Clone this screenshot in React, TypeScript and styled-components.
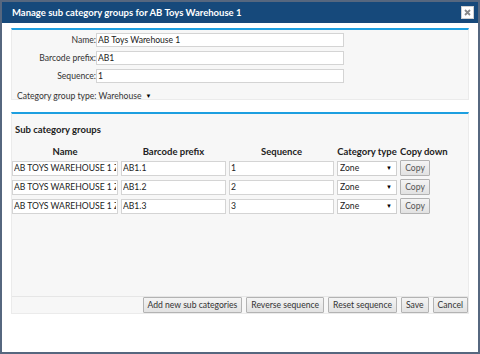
import React from 'react';
import styled, { createGlobalStyle } from 'styled-components';

const Global = createGlobalStyle`
  html, body { margin: 0; padding: 0; background: #fff; }
  body { font-family: Lato, "Open Sans", sans-serif; color: #222; }
  #root { width: 480px; height: 354px; }
  * { box-sizing: border-box; }
`;

const Window = styled.div`
  width: 480px;
  height: 354px;
  border: 2px solid #56677f;
  background: #fff;
  display: flex;
  flex-direction: column;
`;

const TitleBar = styled.div`
  height: 21px;
  flex: none;
  background: #16497b;
  display: flex;
  align-items: center;
  justify-content: space-between;
  padding: 0 4px 0 10px;
`;

const Title = styled.div`
  color: #fff;
  font-weight: 700;
  font-size: 9.5px;
`;

const CloseButton = styled.button`
  width: 13px;
  height: 13px;
  padding: 0;
  background: #fff;
  border: 1px solid #cfcfcf;
  display: flex;
  align-items: center;
  justify-content: center;
`;

const Body = styled.div`
  padding: 5px 9px 0 9px;
  display: flex;
  flex-direction: column;
  gap: 12px;
`;

const Panel = styled.div`
  background: #f7f7f7;
  border: 1px solid #ebebeb;
  border-top: 2px solid #1d9fe0;
`;

const FormPanel = styled(Panel)`
  height: 72px;
  padding-top: 3px;
  display: flex;
  flex-direction: column;
  gap: 4px;
`;

const FormRow = styled.label`
  display: grid;
  grid-template-columns: 84px 248px;
  align-items: center;
  font-size: 8.6px;
`;

const FieldLabel = styled.span`
  text-align: right;
  color: #333;
  white-space: nowrap;
`;

const TextInput = styled.input`
  display: block;
  height: 14px;
  width: 100%;
  border: 1px solid #d4d4d4;
  background: #fff;
  font: inherit;
  font-size: 8.6px;
  color: #222;
  padding: 0 1px;
  outline: none;
`;

const TypeLine = styled.div`
  margin-top: 3px;
  padding-left: 5px;
  font-size: 8.6px;
  color: #333;
  line-height: 12px;
`;

const SmallArrow = styled.span`
  font-size: 6px;
  margin-left: 4px;
  vertical-align: 1px;
  color: #000;
`;

const GroupsPanel = styled(Panel)`
  display: flex;
  flex-direction: column;
`;

const GroupsContent = styled.div`
  height: 182px;
  padding-top: 10px;
`;

const SectionTitle = styled.div`
  font-weight: 700;
  font-size: 9.5px;
  line-height: 12px;
  padding-left: 3px;
  color: #222;
`;

const Grid = styled.div`
  margin-top: 10px;
  display: grid;
  grid-template-columns: 106px 105px 105px 60px 46px;
  column-gap: 3px;
  row-gap: 3px;
  align-items: center;
`;

const HeadCell = styled.div<{ $left?: boolean }>`
  font-weight: 700;
  font-size: 9.5px;
  line-height: 12px;
  text-align: ${p => (p.$left ? 'left' : 'center')};
  white-space: nowrap;
  margin-bottom: -1px;
`;

const CellInput = styled(TextInput)`
  height: 15px;
  padding: 0 1px;
`;

const SelectWrap = styled.div`
  position: relative;
  height: 15px;
`;

const Select = styled.select`
  display: block;
  appearance: none;
  width: 100%;
  height: 15px;
  margin: 0;
  border: 1px solid #cfcfcf;
  border-radius: 0;
  background: #fff;
  font: inherit;
  font-size: 8.6px;
  line-height: 13px;
  padding: 0 2px;
  color: #222;
  outline: none;
`;

const SelectArrow = styled.span`
  position: absolute;
  right: 5px;
  top: 4px;
  font-size: 6px;
  line-height: 6px;
  color: #000;
  pointer-events: none;
`;

const Button = styled.button`
  height: 16px;
  padding: 0 4px;
  border: 1px solid #b3b3b3;
  border-radius: 1px;
  background: linear-gradient(#f4f4f4, #e2e2e2);
  font: inherit;
  font-size: 8.6px;
  color: #333;
  white-space: nowrap;
`;

const CopyButton = styled(Button)`
  display: block;
  width: 30px;
  padding: 0;
  color: #555;
`;

const Footer = styled.div`
  height: 17px;
  border-top: 1px solid #e6e6e6;
  display: flex;
  justify-content: flex-end;
  align-items: flex-start;
  gap: 4px;
`;

const rows = [
  { name: 'AB TOYS WAREHOUSE 1 ZONE 1', prefix: 'AB1.1', seq: '1' },
  { name: 'AB TOYS WAREHOUSE 1 ZONE 2', prefix: 'AB1.2', seq: '2' },
  { name: 'AB TOYS WAREHOUSE 1 ZONE 3', prefix: 'AB1.3', seq: '3' },
];

export default function App() {
  return (
    <>
      <Global />
      <Window>
        <TitleBar>
          <Title>Manage sub category groups for AB Toys Warehouse 1</Title>
          <CloseButton aria-label="Close">
            <svg width="7" height="7" viewBox="0 0 7 7">
              <path d="M1 1 L6 6 M6 1 L1 6" stroke="#888" strokeWidth="1.8" />
            </svg>
          </CloseButton>
        </TitleBar>
        <Body>
          <FormPanel>
            <FormRow>
              <FieldLabel>Name:</FieldLabel>
              <TextInput defaultValue="AB Toys Warehouse 1" />
            </FormRow>
            <FormRow>
              <FieldLabel>Barcode prefix:</FieldLabel>
              <TextInput defaultValue="AB1" />
            </FormRow>
            <FormRow>
              <FieldLabel>Sequence:</FieldLabel>
              <TextInput defaultValue="1" />
            </FormRow>
            <TypeLine>
              Category group type: Warehouse<SmallArrow>▼</SmallArrow>
            </TypeLine>
          </FormPanel>
          <GroupsPanel>
            <GroupsContent>
              <SectionTitle>Sub category groups</SectionTitle>
              <Grid>
                <HeadCell>Name</HeadCell>
                <HeadCell>Barcode prefix</HeadCell>
                <HeadCell>Sequence</HeadCell>
                <HeadCell>Category type</HeadCell>
                <HeadCell $left>Copy down</HeadCell>
                {rows.map(r => (
                  <React.Fragment key={r.prefix}>
                    <CellInput defaultValue={r.name} />
                    <CellInput defaultValue={r.prefix} />
                    <CellInput defaultValue={r.seq} />
                    <SelectWrap>
                      <Select defaultValue="Zone">
                        <option>Zone</option>
                      </Select>
                      <SelectArrow>▼</SelectArrow>
                    </SelectWrap>
                    <CopyButton>Copy</CopyButton>
                  </React.Fragment>
                ))}
              </Grid>
            </GroupsContent>
            <Footer>
              <Button>Add new sub categories</Button>
              <Button>Reverse sequence</Button>
              <Button>Reset sequence</Button>
              <Button>Save</Button>
              <Button>Cancel</Button>
            </Footer>
          </GroupsPanel>
        </Body>
      </Window>
    </>
  );
}
